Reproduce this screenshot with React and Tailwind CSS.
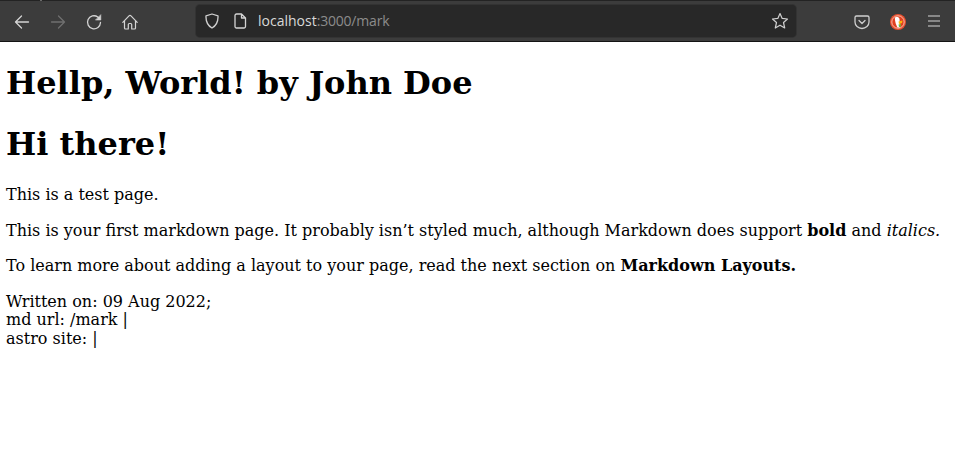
import React from 'react';

const Toolbar = () => (
  <div className="font-['Open_Sans',sans-serif]">
    <div className="h-[1px] bg-[#232323] pl-[40px]">
      <div className="w-[2px] h-[1px] bg-[#6a6a6a]" />
    </div>
    <div className="h-[40px] flex items-center bg-[#3c3c3c]">
      <div className="w-[196px] flex items-center gap-[18px] pl-[13px] shrink-0 mt-[2px]">
        <svg className="w-[18px] h-[18px]" viewBox="0 0 18 18" fill="none" stroke="#d4d4d4" strokeWidth="1.3" strokeLinecap="round" strokeLinejoin="round">
          <path d="M15.500 9H2.500M8.500 3 2.500 9l6 6" />
        </svg>
        <svg className="w-[18px] h-[18px]" viewBox="0 0 18 18" fill="none" stroke="#6f6f6f" strokeWidth="1.3" strokeLinecap="round" strokeLinejoin="round">
          <path d="M2.500 9h13M9.500 3l6 6-6 6" />
        </svg>
        <svg className="w-[18px] h-[18px]" viewBox="0 0 18 18" fill="none" stroke="#d4d4d4" strokeWidth="1.3" strokeLinecap="round" strokeLinejoin="round">
          <path d="M15.500 9.500A6.500 6.500 0 1 1 12.800 4l1.700 1.800" />
          <path d="M15.800 2v5h-5z" fill="#d4d4d4" strokeWidth="0.6" />
        </svg>
        <svg className="w-[18px] h-[18px]" viewBox="0 0 18 18" fill="none" stroke="#d4d4d4" strokeWidth="1.200" strokeLinecap="round" strokeLinejoin="round">
          <path d="M1.800 9.300 8 2.800a1.400 1.400 0 0 1 2 0l6.200 6.500M3.500 8v7a1 1 0 0 0 1 1h2.800v-4.500a1 1 0 0 1 1-1h1.400a1 1 0 0 1 1 1V16h2.800a1 1 0 0 0 1-1V8" />
        </svg>
      </div>
      <div className="w-[600px] h-[32px] bg-[#282828] rounded-[4px] flex items-center pl-[9px] pr-[7px] shrink-0 shadow-[0_0_0_1px_#333333]">
        <svg className="w-[14px] h-[16px]" viewBox="0 0 14 16" fill="none" stroke="#cfcfcf" strokeWidth="1.300" strokeLinejoin="round">
          <path d="M7 1 13 2.800c.3 5.800-1.600 9.700-6 12.200C2.600 12.500.7 8.600 1 2.800z" />
        </svg>
        <svg className="w-[14px] h-[16px] ml-[14px]" viewBox="0 0 14 16" fill="none" stroke="#d4d4d4" strokeWidth="1.300" strokeLinejoin="round">
          <path d="M2 2.500A1.500 1.500 0 0 1 3.500 1H8.500L12.500 5V13.500A1.500 1.500 0 0 1 11 15H3.500A1.500 1.500 0 0 1 2 13.500zM8.500 1V5H12.500" />
        </svg>
        <span className="ml-[11px] text-[14px] leading-none text-[#d8d8d8]">
          localhost<span className="text-[#8c8c8c] tracking-[-0.2px]">:3000/mark</span>
        </span>
        <svg className="w-[18px] h-[18px] ml-auto" viewBox="0 0 18 18" fill="none" stroke="#cfcfcf" strokeWidth="1.200" strokeLinejoin="round">
          <path d="M9 1.500 11.200 6.400 16.500 7 12.500 10.500 13.700 16 9 13.200 4.300 16 5.500 10.500 1.500 7 6.800 6.400z" />
        </svg>
      </div>
      <div className="flex-1 flex items-center pl-[58px] mt-[1px]">
        <svg className="w-[16px] h-[16px]" viewBox="0 0 16 16" fill="none" stroke="#cfcfcf" strokeWidth="1.300" strokeLinecap="round" strokeLinejoin="round">
          <path d="M2.500 2h11A1.500 1.500 0 0 1 15 3.500V8A7 6.500 0 0 1 1 8V3.500A1.500 1.500 0 0 1 2.500 2zM5 6.500l3 3 3-3" />
        </svg>
        <svg className="w-[16px] h-[16px] ml-[20px]" viewBox="0 0 16 16">
          <circle cx="8" cy="8" r="8" fill="#e8502f" />
          <circle cx="8" cy="8" r="6.200" fill="#e0401f" stroke="#fbd5c8" strokeWidth="0.800" />
          <path d="M5 3.500c2-1 4-.5 4.500 1.500l.5 8.500H7.500C6 11 4.500 6 5 3.500z" fill="#fff" />
          <path d="M8.500 7.500 12.500 6.500 12 9l-3 1z" fill="#fdb70a" />
          <path d="M8.500 10.500 11 10l-.5 3H9z" fill="#65bc46" />
        </svg>
        <svg className="w-[12px] h-[12px] ml-[22px] -mt-[1px]" viewBox="0 0 12 12" fill="none" stroke="#d4d4d4" strokeWidth="1.200">
          <path d="M0 1h12M0 6h12M0 11h12" />
        </svg>
      </div>
    </div>
    <div className="h-[1px] bg-[#141414]" />
  </div>
);

export default function App() {
  return (
    <div className="h-[460px] bg-white text-black overflow-hidden font-['DejaVu_Serif',serif]">
      <Toolbar />
      <div className="px-[6px] text-[16px] leading-[18.6px]">
        <h1 className="text-[32px] leading-[37px] font-bold mt-[23px] mb-[24px]">Hellp, World! by John Doe</h1>
        <h1 className="text-[32px] leading-[37px] font-bold mb-[23px]">Hi there!</h1>
        <p className="mb-[17px]">This is a test page.</p>
        <p className="mb-[17px]">
          This is your first markdown page. It probably isn’t styled much, although Markdown does support <strong>bold</strong> and <em>italics.</em>
        </p>
        <p className="mb-[17px]">
          To learn more about adding a layout to your page, read the next section on <strong>Markdown Layouts.</strong>
        </p>
        <p>
          Written on: 09 Aug 2022;
          <br />
          md url: /mark |
          <br />
          astro site: |
        </p>
      </div>
    </div>
  );
}
